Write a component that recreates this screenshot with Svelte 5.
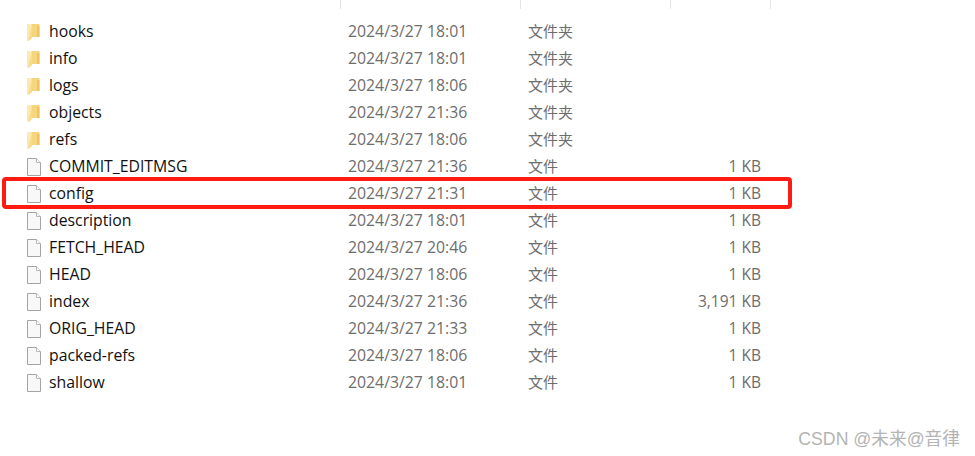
<script>
  const D = '文件夹';
  const F = '文件';
  const files = [
    { name: 'hooks', date: '2024/3/27 18:01', type: D, size: '' },
    { name: 'info', date: '2024/3/27 18:01', type: D, size: '' },
    { name: 'logs', date: '2024/3/27 18:06', type: D, size: '' },
    { name: 'objects', date: '2024/3/27 21:36', type: D, size: '' },
    { name: 'refs', date: '2024/3/27 18:06', type: D, size: '' },
    { name: 'COMMIT_EDITMSG', date: '2024/3/27 21:36', type: F, size: '1 KB' },
    { name: 'config', date: '2024/3/27 21:31', type: F, size: '1 KB', marked: true },
    { name: 'description', date: '2024/3/27 18:01', type: F, size: '1 KB' },
    { name: 'FETCH_HEAD', date: '2024/3/27 20:46', type: F, size: '1 KB' },
    { name: 'HEAD', date: '2024/3/27 18:06', type: F, size: '1 KB' },
    { name: 'index', date: '2024/3/27 21:36', type: F, size: '3,191 KB' },
    { name: 'ORIG_HEAD', date: '2024/3/27 21:33', type: F, size: '1 KB' },
    { name: 'packed-refs', date: '2024/3/27 18:06', type: F, size: '1 KB' },
    { name: 'shallow', date: '2024/3/27 18:01', type: F, size: '1 KB' }
  ];
</script>

<div class="page">
  <div class="header">
    <span></span><span></span><span></span><span></span>
  </div>

  <div class="list">
    {#each files as f}
      <div class="row" class:marked={f.marked}>
        <div class="name">
          {#if f.type === D}
            <svg class="icon" width="16" height="18" viewBox="0 0 16 18">
              <path d="M5 1h8.500v13H5z" fill="#f6d67c" />
              <path d="M11 3h2.500v11H11z" fill="#efc45f" />
              <path d="M1 1h2l3 1.500V15l-3.500 3-1.500-.5z" fill="#fde9ae" />
              <path d="M6 2.500V15l-3.500 3V15z" fill="#f8dc8c" />
            </svg>
          {:else}
            <svg class="icon" width="16" height="18" viewBox="0 0 16 18">
              <path d="M1.500 0.500h9l4 4v13h-13z" fill="#f8f8f8" stroke="#a4a4a4" />
              <path d="M10.500 0.500v4h4" fill="#fff" stroke="#b8b8b8" />
            </svg>
          {/if}
          <span class="label">{f.name}</span>
        </div>
        <div class="date">{f.date}</div>
        <div class="type">{f.type}</div>
        <div class="size">{f.size}</div>
      </div>
    {/each}
  </div>

  <div class="watermark">CSDN @未来@音律</div>
</div>

<style>
  :global(body) {
    margin: 0;
    background: #fff;
  }

  .page {
    position: relative;
    width: 975px;
    height: 456px;
    overflow: hidden;
    font-family: "Open Sans", "Noto Sans CJK SC", sans-serif;
    font-size: 15.8px;
    color: #111;
  }

  .header {
    display: grid;
    grid-template-columns: 180px 150px 100px 1px;
    height: 9px;
    padding-left: 340px;
  }

  .header span {
    border-left: 1px solid #e5e5e5;
  }

  .list {
    padding-top: 9px;
  }

  .row {
    position: relative;
    display: grid;
    grid-template-columns: 348px 180px 150px 83px;
    height: 27px;
    align-items: center;
    white-space: nowrap;
  }

  .marked::after {
    content: "";
    position: absolute;
    left: 2px;
    top: -3px;
    width: 782px;
    height: 24px;
    border: 4px solid #fe1b12;
    border-radius: 4px;
  }

  .name {
    display: flex;
    align-items: center;
    gap: 7px;
    padding-left: 26px;
  }

  .label,
  .date,
  .size {
    padding-bottom: 2px;
  }

  .icon {
    flex: none;
  }

  .date,
  .type,
  .size {
    color: #6d6d6d;
  }

  .type {
    font-size: 15px;
    line-height: 25px;
  }

  .size {
    font-size: 15.5px;
    text-align: right;
  }

  .watermark {
    position: absolute;
    right: 15px;
    top: 424px;
    font-family: "Liberation Sans", "Noto Sans CJK SC", sans-serif;
    font-size: 17.7px;
    color: #b4b4b4;
  }
</style>
